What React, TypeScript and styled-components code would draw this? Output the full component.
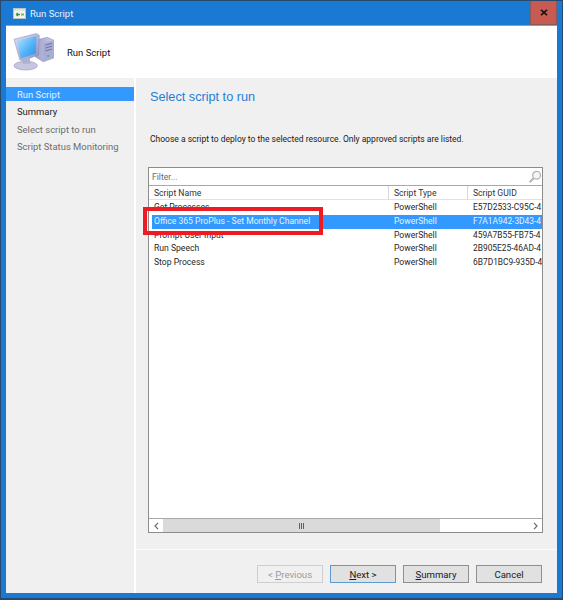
import React from 'react';
import styled, { createGlobalStyle } from 'styled-components';

const GlobalStyle = createGlobalStyle`
  html, body {
    margin: 0;
    padding: 0;
    background: #1a7bd4;
  }
  * {
    box-sizing: border-box;
  }
`;

const uiFont = `Roboto, "Open Sans", sans-serif`;

const Window = styled.div`
  width: 563px;
  height: 600px;
  display: flex;
  flex-direction: column;
  background: #1979d3;
  border: 1px solid #27496b;
  border-bottom-width: 2px;
  font-family: ${uiFont};
  font-size: 9.6px;
  color: #1a1a1a;
  overflow: hidden;
`;

const TitleBar = styled.div`
  height: 24px;
  flex: none;
  display: flex;
  align-items: center;
  padding-left: 12px;
  color: #e8f2fb;
  font-size: 9.5px;
  gap: 4px;
`;

const CloseButton = styled.div`
  margin-left: auto;
  margin-right: 5px;
  width: 27px;
  height: 24px;
  background: #c75a52;
  border: 1px solid #8a5a58;
  border-top: none;
  display: flex;
  align-items: center;
  justify-content: center;
`;

const Frame = styled.div`
  flex: 1;
  min-height: 0;
  margin: 0 5px 5px 5px;
  display: flex;
  flex-direction: column;
  background: #f0f0f0;
  border-top: 1px solid #6aa9e2;
`;

const Banner = styled.div`
  height: 52px;
  flex: none;
  background: #ffffff;
  display: flex;
  align-items: center;
  padding-left: 7px;
  gap: 13px;
  color: #111;
  font-size: 9.5px;
`;

const Body = styled.div`
  flex: 1;
  min-height: 0;
  display: flex;
`;

const Sidebar = styled.div`
  width: 129px;
  flex: none;
  padding-top: 9px;
  border-right: 1px solid #ffffff;
  display: flex;
  flex-direction: column;
`;

const Step = styled.div<{ $state: 'active' | 'done' | 'todo' }>`
  height: 14px;
  margin-bottom: 3.6px;
  padding-left: 11px;
  display: flex;
  align-items: center;
  white-space: nowrap;
  font-size: 9.45px;
  background: ${(p) => (p.$state === 'active' ? '#3399ff' : 'transparent')};
  color: ${(p) =>
    p.$state === 'active' ? '#e6f2ff' : p.$state === 'done' ? '#222' : '#6d6d6d'};
`;

const Main = styled.div`
  flex: 1;
  min-width: 0;
  display: flex;
  flex-direction: column;
  border-left: 1px solid #ffffff;
`;

const Content = styled.div`
  flex: 1;
  min-height: 0;
  display: flex;
  flex-direction: column;
  padding: 11px 14px 16px 12px;
`;

const Heading = styled.div`
  font-family: "Liberation Sans", sans-serif;
  font-size: 12.7px;
  line-height: 17px;
  padding-left: 2px;
  color: #1c7fd6;
`;

const Description = styled.div`
  margin-top: 27px;
  padding-left: 2px;
  line-height: 13px;
  white-space: nowrap;
  font-size: 8.5px;
  color: #1a1a1a;
`;

const ListPanel = styled.div`
  position: relative;
  margin-top: 21px;
  flex: 1;
  min-height: 0;
  display: flex;
  flex-direction: column;
  background: #ffffff;
  border: 1px solid #8c8c8c;
  font-size: 8.6px;
`;

const FilterBar = styled.div`
  height: 18px;
  flex: none;
  display: flex;
  align-items: center;
  justify-content: space-between;
  padding: 1px 0 0 3px;
  color: #6a6a6a;
  border-bottom: 1px solid #a8a8a8;
`;

const Rows = styled.div`
  flex: 1;
  min-height: 0;
  overflow: hidden;
`;

const HeaderRow = styled.div`
  height: 14px;
  display: grid;
  grid-template-columns: 240px 79px 1fr;
  color: #333;
  background: #ffffff;
  margin-bottom: 1px;
`;

const HeaderCell = styled.div`
  padding-left: 5px;
  line-height: 14px;
  white-space: nowrap;
  overflow: hidden;
  border-right: 1px solid #d8d8d8;
  border-bottom: 1px solid #e2e2e2;

  &:last-child {
    border-right: none;
  }
`;

/* the selection stops short of the list's left edge, as in the wizard */
const Row = styled.div<{ $selected?: boolean }>`
  height: 13.8px;
  margin-left: 3px;
  display: grid;
  grid-template-columns: 237px 79px 1fr;
  background: ${(p) => (p.$selected ? '#3399ff' : 'transparent')};
  color: ${(p) => (p.$selected ? '#e6f2ff' : '#1f1f1f')};
`;

const Cell = styled.div`
  padding-left: 5px;
  line-height: 13.8px;
  white-space: nowrap;
`;

const NameCell = styled(Cell)`
  padding-left: 2px;
`;

const GuidCell = styled(Cell)`
  font-size: 8.4px;
`;

const Callout = styled.div`
  position: absolute;
  left: -6px;
  top: 39px;
  width: 180px;
  height: 28px;
  border: 4px solid #ed1c24;
  pointer-events: none;
`;

const ScrollBar = styled.div`
  height: 14px;
  flex: none;
  display: flex;
  align-items: stretch;
  background: #ffffff;
  border-top: 1px solid #a8a8a8;
`;

const ScrollArrow = styled.div<{ $end?: boolean }>`
  width: 14px;
  flex: none;
  display: flex;
  align-items: center;
  justify-content: center;
  margin-left: ${(p) => (p.$end ? 'auto' : '0')};
`;

const ScrollThumb = styled.div`
  width: 277px;
  flex: none;
  background: #dadada;
  display: flex;
  align-items: center;
  justify-content: center;
  gap: 1px;
`;

const Grip = styled.span`
  width: 1px;
  height: 6px;
  background: #606060;
`;

const Footer = styled.div`
  height: 44px;
  flex: none;
  display: flex;
  justify-content: flex-end;
  gap: 7px;
  padding: 15px 15px 0 0;
  border-top: 1px solid #fbfbfb;
`;

const FooterButton = styled.div<{ $variant?: 'disabled' | 'default' }>`
  width: 66px;
  height: 18px;
  display: flex;
  align-items: center;
  justify-content: center;
  background: ${(p) => (p.$variant === 'disabled' ? '#f0f0f0' : '#e1e1e1')};
  border: 1px solid
    ${(p) =>
      p.$variant === 'disabled' ? '#cfcfcf' : p.$variant === 'default' ? '#5b9bd1' : '#8f8f8f'};
  color: ${(p) => (p.$variant === 'disabled' ? '#9a9a9a' : '#1a1a1a')};

  u {
    text-underline-offset: 1px;
  }
`;

const WindowGlyph = () => (
  <svg width="13" height="11" viewBox="0 0 13 11">
    <rect x="0.5" y="0.5" width="12" height="10" fill="#f4f4ee" stroke="#b9c4bd" />
    <rect x="1" y="1" width="11" height="2" fill="#dfe3dc" />
    <path d="M3 6.5h4M3 6.5l2-1.6M3 6.5l2 1.6" stroke="#3f9a3f" strokeWidth="1.3" fill="none" />
    <rect x="8" y="5.5" width="3" height="2" fill="#7fae7f" />
  </svg>
);

const ComputerIcon = () => (
  <svg width="41" height="38" viewBox="0 0 42 38">
    <defs>
      <linearGradient id="screen" x1="0" y1="0" x2="1" y2="1">
        <stop offset="0" stopColor="#bfe6ff" />
        <stop offset="0.55" stopColor="#55b4f7" />
        <stop offset="1" stopColor="#2f8de6" />
      </linearGradient>
      <linearGradient id="bezel" x1="0" y1="0" x2="1" y2="1">
        <stop offset="0" stopColor="#dfe1f2" />
        <stop offset="1" stopColor="#8d90c0" />
      </linearGradient>
      <linearGradient id="tower" x1="0" y1="0" x2="1" y2="0">
        <stop offset="0" stopColor="#9fa3cd" />
        <stop offset="1" stopColor="#c9cbe4" />
      </linearGradient>
    </defs>
    <path d="M23 7l12-3 7 3v18l-11 4-8-5z" fill="url(#tower)" stroke="#7d80ad" strokeWidth="0.5" />
    <path d="M31 10l11-3v18l-11 4z" fill="#a9acd4" />
    <path d="M33 12l7-2M33 15l7-2M33 18l7-2" stroke="#6d70a3" strokeWidth="1" />
    <circle cx="36" cy="23" r="1" fill="#63a35f" />
    <path d="M1 6L24 0l3 2-1 20-16 6-3-1z" fill="url(#bezel)" stroke="#8386b4" strokeWidth="0.5" />
    <path d="M4 7.5L24 2.5 23.5 20.5 8 25.5z" fill="url(#screen)" />
    <ellipse cx="13" cy="33" rx="12" ry="4.5" fill="#c5c7df" stroke="#8386b4" strokeWidth="0.5" />
    <path d="M10 26l7-2 1 7h-8z" fill="#aeb0d2" />
  </svg>
);

const CloseIcon = () => (
  <svg width="8" height="7" viewBox="0 0 8 7">
    <path d="M1 0.8l6 5.4M7 0.8l-6 5.4" stroke="#1c1414" strokeWidth="1.7" />
  </svg>
);

const SearchIcon = () => (
  <svg width="14" height="14" viewBox="0 0 14 14">
    <circle cx="8.6" cy="5.2" r="3.9" fill="#f6f6f6" stroke="#b4b4b4" strokeWidth="1.3" />
    <path d="M5.6 8.2L1.6 12.4" stroke="#b4b4b4" strokeWidth="2" />
  </svg>
);

const ArrowIcon = ({ right }: { right?: boolean }) => (
  <svg width="5" height="8" viewBox="0 0 5 8">
    <path
      d={right ? 'M1 0.8L4 4 1 7.2' : 'M4 0.8L1 4 4 7.2'}
      fill="none"
      stroke="#6a6a6a"
      strokeWidth="1.2"
    />
  </svg>
);

const scripts = [
  { name: 'Get Processes', guid: 'E57D2533-C95C-4' },
  { name: 'Office 365 ProPlus - Set Monthly Channel', guid: 'F7A1A942-3D43-4', selected: true },
  { name: 'Prompt User Input', guid: '459A7B55-FB75-4' },
  { name: 'Run Speech', guid: '2B905E25-46AD-4' },
  { name: 'Stop Process', guid: '6B7D1BC9-935D-4' },
];

export default function App() {
  return (
    <>
      <GlobalStyle />
      <Window>
        <TitleBar>
          <WindowGlyph />
          Run Script
          <CloseButton>
            <CloseIcon />
          </CloseButton>
        </TitleBar>
        <Frame>
          <Banner>
            <ComputerIcon />
            Run Script
          </Banner>
          <Body>
            <Sidebar>
              <Step $state="active">Run Script</Step>
              <Step $state="done">Summary</Step>
              <Step $state="todo">Select script to run</Step>
              <Step $state="todo">Script Status Monitoring</Step>
            </Sidebar>
            <Main>
              <Content>
                <Heading>Select script to run</Heading>
                <Description>
                  Choose a script to deploy to the selected resource. Only approved scripts are listed.
                </Description>
                <ListPanel>
                  <FilterBar>
                    Filter...
                    <SearchIcon />
                  </FilterBar>
                  <Rows>
                    <HeaderRow>
                      <HeaderCell>Script Name</HeaderCell>
                      <HeaderCell>Script Type</HeaderCell>
                      <HeaderCell>Script GUID</HeaderCell>
                    </HeaderRow>
                    {scripts.map((s) => (
                      <Row key={s.name} $selected={s.selected}>
                        <NameCell>{s.name}</NameCell>
                        <Cell>PowerShell</Cell>
                        <GuidCell>{s.guid}</GuidCell>
                      </Row>
                    ))}
                  </Rows>
                  <ScrollBar>
                    <ScrollArrow>
                      <ArrowIcon />
                    </ScrollArrow>
                    <ScrollThumb>
                      <Grip />
                      <Grip />
                      <Grip />
                    </ScrollThumb>
                    <ScrollArrow $end>
                      <ArrowIcon right />
                    </ScrollArrow>
                  </ScrollBar>
                  <Callout />
                </ListPanel>
              </Content>
              <Footer>
                <FooterButton $variant="disabled">
                  &lt;&nbsp;<u>P</u>revious
                </FooterButton>
                <FooterButton $variant="default">
                  <u>N</u>ext &gt;
                </FooterButton>
                <FooterButton>
                  <u>S</u>ummary
                </FooterButton>
                <FooterButton>Cancel</FooterButton>
              </Footer>
            </Main>
          </Body>
        </Frame>
      </Window>
    </>
  );
}
